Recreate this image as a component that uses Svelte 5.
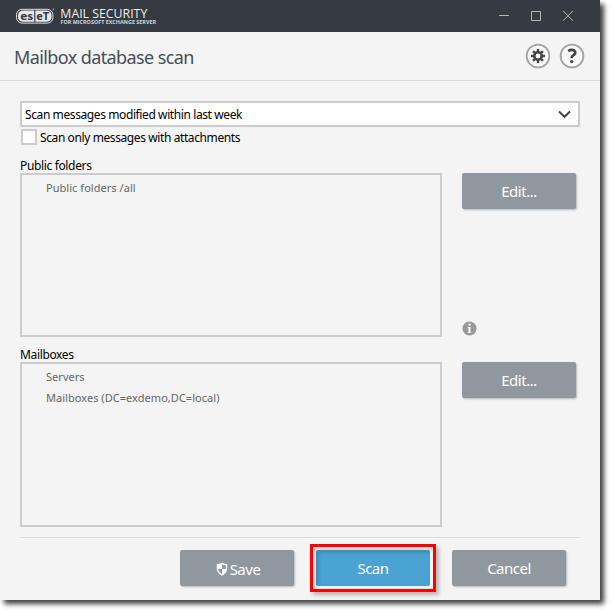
<script lang="ts">
    let period = "Scan messages modified within last week";
    let attachmentsOnly = false;

    const sections = [
        { title: "Public folders", items: ["Public folders /all"], info: true },
        {
            title: "Mailboxes",
            items: ["Servers", "Mailboxes (DC=exdemo,DC=local)"],
            info: false,
        },
    ];
</script>

<div class="window">
    <div class="titlebar">
        <svg class="logo" width="144" height="20" viewBox="0 0 144 20">
            <rect x="0.5" y="4.3" width="36.4" height="13.8" rx="5.5" fill="none" stroke="#e0e2e4" />
            <path d="M18.2 5.6H7Q2 6 2 11.2T7 16.8H18.2Z" fill="#e6e8e9" />
            <path d="M19.4 5.6H31Q35.6 6 35.6 11.2T31 16.8H19.4Z" fill="#e6e8e9" />
            <text class="brand" x="4.3" y="14.6" textLength="13" lengthAdjust="spacingAndGlyphs">es</text>
            <text class="brand" x="20.2" y="14.6" textLength="13" lengthAdjust="spacingAndGlyphs">eT</text>
            <circle cx="37.4" cy="4.2" r="0.8" fill="#b9bdc0" />
            <text class="product" x="44.3" y="13.4" textLength="87" lengthAdjust="spacingAndGlyphs">MAIL SECURITY</text>
            <text class="edition" x="44.5" y="18.6" textLength="95.5" lengthAdjust="spacingAndGlyphs">FOR MICROSOFT EXCHANGE SERVER</text>
        </svg>
        <svg class="controls" width="76" height="12" viewBox="0 0 76 12">
            <path d="M0 5.5h10M32.5 1.5h9v9h-9zM64 .8l10 10M74 .8l-10 10" />
        </svg>
    </div>

    <div class="header">
        <h1>Mailbox database scan</h1>
        <div class="tools">
            <svg width="26" height="26" viewBox="0 0 26 26">
                <circle class="ring" cx="13" cy="13" r="11.4" />
                {#each [0, 45, 90, 135, 180, 225, 270, 315] as angle}
                    <rect x="11.8" y="6" width="2.4" height="3.5" fill="#444" transform="rotate({angle} 13 13)" />
                {/each}
                <circle cx="13" cy="13" r="3.7" fill="none" stroke="#444" stroke-width="2.5" />
            </svg>
            <svg width="26" height="26" viewBox="0 0 26 26">
                <circle class="ring" cx="13" cy="13" r="11.4" />
                <path d="M9.2 8Q13 5.8 15.3 7.6C17.3 9.4 16 11.2 14.2 12.3Q12.6 13.3 12.7 15.2" fill="none" stroke="#444" stroke-width="2.7" />
                <circle cx="12.7" cy="18.6" r="1.7" fill="#444" />
            </svg>
        </div>
    </div>

    <div class="content">
        <div class="select">
            <span>{period}</span>
            <svg width="13" height="9" viewBox="0 0 13 9">
                <path d="M1 1.5l5.5 5.3L12 1.5" fill="none" stroke="#444" stroke-width="2" />
            </svg>
        </div>
        <div class="check">
            <div class="box" class:checked={attachmentsOnly}></div>
            <span>Scan only messages with attachments</span>
        </div>

        {#each sections as section}
            <div class="section">
                <div class="title">{section.title}</div>
                <div class="row">
                    <ul class:tall={!section.info}>
                        {#each section.items as item}
                            <li>{item}</li>
                        {/each}
                    </ul>
                    <div class="side">
                        <button>Edit...</button>
                        {#if section.info}
                            <svg class="info" width="15" height="15" viewBox="0 0 15 15">
                                <circle cx="7.5" cy="7.5" r="7" fill="#999" />
                                <path d="M6.4 2.8h2.2v1.8H6.4zM5.8 5.9h2.7v5h.7v.9H5.7v-.9h.8V6.8h-.7z" fill="#fff" />
                            </svg>
                        {/if}
                    </div>
                </div>
            </div>
        {/each}
    </div>

    <div class="footer">
        <button class="save">
            <svg width="12" height="14" viewBox="0 0 12 14">
                <path d="M6 .5Q8.2 2 11.2 2.1V7Q11 11.2 6 13.7Q1 11.2 .8 7V2.1Q3.8 2 6 .5z" fill="#fff" />
                <path d="M6 2.2Q7.8 3.2 9.9 3.4V7H6zM6 7V12.1Q2.3 10.2 2.1 7z" fill="#90989f" />
            </svg>
            Save
        </button>
        <div class="highlight">
            <button class="primary">Scan</button>
        </div>
        <button>Cancel</button>
    </div>
</div>

<style>
    :global(body) {
        height: 615px;
        background: #fff;
        overflow: hidden;
    }

    .window {
        width: 600px;
        height: 600px;
        display: flex;
        flex-direction: column;
        background: #f4f4f4;
        font-family: "Noto Sans", "Open Sans", sans-serif;
        box-shadow: 4px 4px 5px rgba(0, 0, 0, 0.75);
    }

    .titlebar {
        height: 32px;
        display: flex;
        justify-content: space-between;
        background: #363b42;
    }
    .logo {
        margin: 5px 0 0 16px;
    }
    .brand {
        font: bold 11px "Noto Sans", sans-serif;
        fill: #363b42;
    }
    .product {
        font: 12px "Open Sans", sans-serif;
        fill: #eceeef;
    }
    .edition {
        font: bold 5px "Open Sans", sans-serif;
        fill: #d4d7d9;
    }
    .controls {
        margin: 10px 25px 0 0;
    }
    .controls path {
        fill: none;
        stroke: #b3b6b9;
    }

    .header {
        box-sizing: border-box;
        height: 49px;
        display: flex;
        justify-content: space-between;
        border-bottom: 1px solid #dcdcdc;
    }
    h1 {
        margin: 12px 0 0 14px;
        font-size: 18px;
        line-height: 26px;
        font-weight: 400;
        letter-spacing: -0.6px;
        color: #464e57;
    }
    .tools {
        display: flex;
        gap: 8px;
        margin: 11px 15px 0 0;
    }
    .ring {
        fill: #f8f8f8;
        stroke: #a3a3a3;
        stroke-width: 1.8;
    }

    .content {
        height: 456px;
        padding: 20px 20px 0;
        box-sizing: border-box;
        font-size: 12px;
        color: #000;
    }
    .select {
        box-sizing: border-box;
        height: 26px;
        display: flex;
        align-items: center;
        justify-content: space-between;
        padding: 0 7px 0 3px;
        border: 2px solid #ccc;
        background: #fff;
        letter-spacing: -0.4px;
    }
    .check {
        display: flex;
        gap: 3px;
        height: 16px;
        line-height: 18px;
        padding: 2px 0 0 1px;
        letter-spacing: -0.4px;
    }
    .box {
        box-sizing: border-box;
        width: 16px;
        height: 16px;
        border: 2px solid #ccc;
        background: #fff;
    }
    .box.checked {
        background: #4aa3d3;
    }

    .section {
        margin-top: 9px;
    }
    .check + .section {
        margin-top: 12px;
    }
    .title {
        height: 16px;
        line-height: 17px;
        letter-spacing: -0.35px;
    }
    .row {
        display: flex;
        gap: 20px;
    }
    ul {
        box-sizing: border-box;
        width: 422px;
        height: 164px;
        margin: 0;
        padding: 3px 0 0 24px;
        border: 2px solid #ccc;
        list-style-type: none;
        font-size: 11px;
        letter-spacing: 0.04px;
        color: #666;
    }
    ul.tall {
        height: 165px;
    }
    li {
        height: 21px;
        line-height: 20px;
    }
    .side {
        display: flex;
        flex-direction: column;
        justify-content: space-between;
    }
    .info {
        margin-bottom: 1px;
    }

    button {
        box-sizing: border-box;
        width: 114px;
        height: 36px;
        padding: 0 0 1px;
        border: 0;
        border-radius: 2px;
        background: #90989f;
        box-shadow: 1px 1px 2px rgba(0, 0, 0, 0.25);
        color: #fff;
        font-family: inherit;
        font-size: 15px;
        letter-spacing: -0.5px;
    }
    .save {
        display: flex;
        align-items: center;
        justify-content: center;
        gap: 2px;
        padding: 2px 0 0 2px;
    }
    .footer {
        height: 55px;
        display: flex;
        align-items: flex-start;
        margin: 0 20px;
        padding: 12px 0 0 160px;
        box-sizing: border-box;
        border-top: 1px solid #dcdcdc;
    }
    .highlight {
        margin: -6px 16px 0;
        padding: 3px;
        border: 3px solid #f00;
        box-shadow: 3px 3px 4px rgba(0, 0, 0, 0.25), inset 2px 2px 4px rgba(0, 0, 0, 0.2);
    }
    .primary {
        display: block;
        background: #4aa3d3;
        box-shadow: inset 2px 2px 4px rgba(0, 0, 0, 0.18);
    }
</style>
